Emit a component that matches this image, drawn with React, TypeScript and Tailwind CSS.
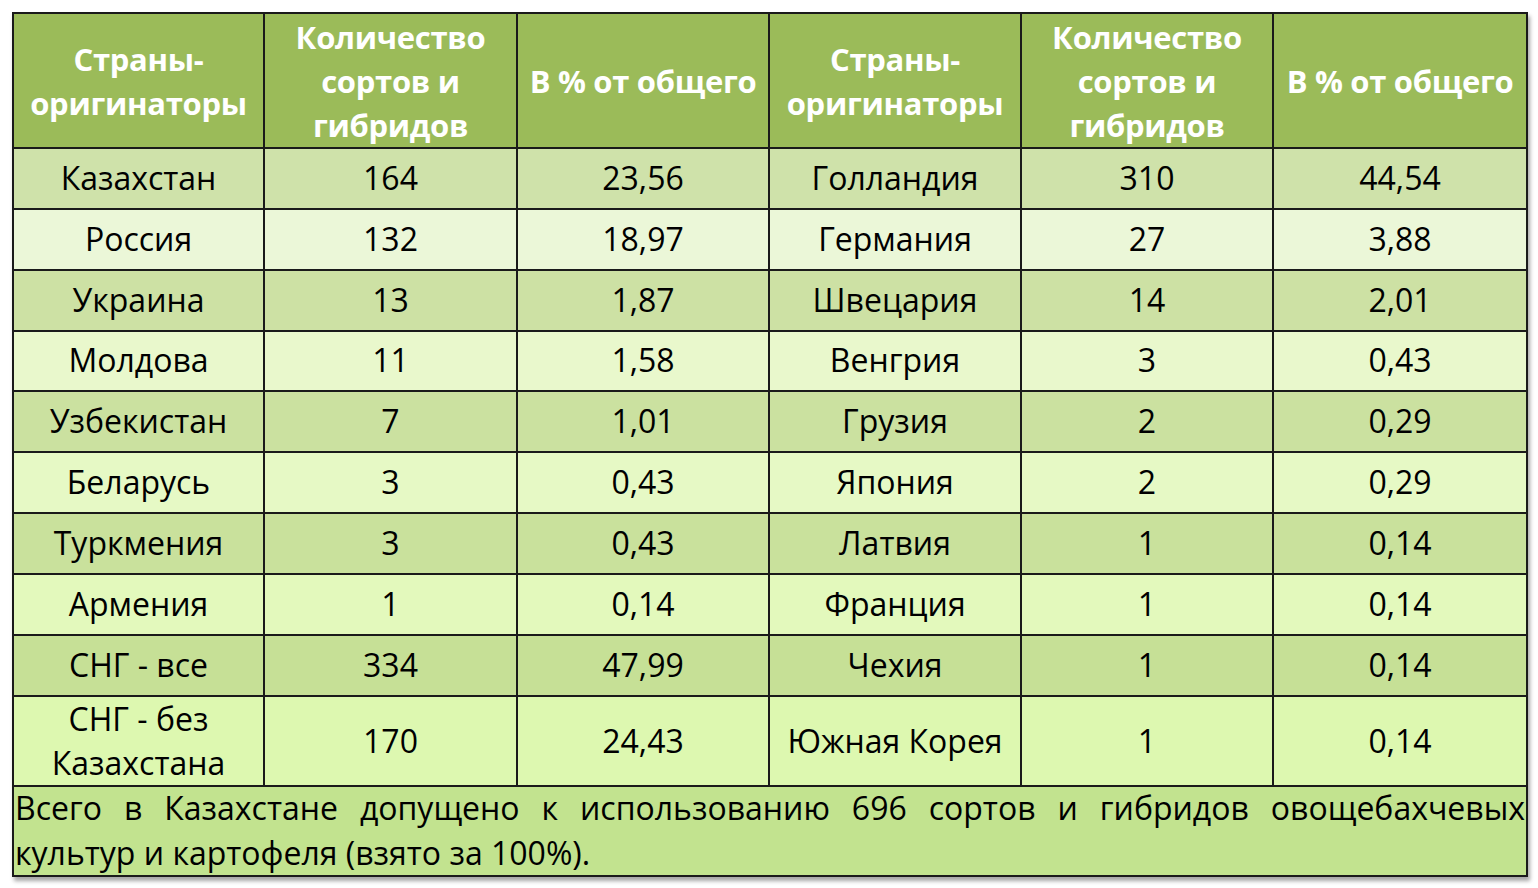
import React from "react";

const header = [
  "Страны-\nоригинаторы",
  "Количество\nсортов и\nгибридов",
  "В % от общего",
  "Страны-\nоригинаторы",
  "Количество\nсортов и\nгибридов",
  "В % от общего",
];

const rows: [string, string, string, string, string, string, string, string][] = [
  ["Казахстан", "164", "23,56", "Голландия", "310", "44,54", "bg-[#cfe2aa]", "h-[61px]"],
  ["Россия", "132", "18,97", "Германия", "27", "3,88", "bg-[#ebf7d8]", "h-[61px]"],
  ["Украина", "13", "1,87", "Швецария", "14", "2,01", "bg-[#cde1a4]", "h-[61px]"],
  ["Молдова", "11", "1,58", "Венгрия", "3", "0,43", "bg-[#e9f8cc]", "h-[60px]"],
  ["Узбекистан", "7", "1,01", "Грузия", "2", "0,29", "bg-[#cbe1a0]", "h-[61px]"],
  ["Беларусь", "3", "0,43", "Япония", "2", "0,29", "bg-[#e6f9c5]", "h-[61px]"],
  ["Туркмения", "3", "0,43", "Латвия", "1", "0,14", "bg-[#c9e19c]", "h-[61px]"],
  ["Армения", "1", "0,14", "Франция", "1", "0,14", "bg-[#e3f9bc]", "h-[61px]"],
  ["СНГ - все", "334", "47,99", "Чехия", "1", "0,14", "bg-[#c6e096]", "h-[61px]"],
  ["СНГ - без\nКазахстана", "170", "24,43", "Южная Корея", "1", "0,14", "bg-[#ddf8b0]", "h-[88px]"],
];

export default function App() {
  return (
    <div className="w-[1538px] h-[888px] bg-white pt-[12px] pl-[12px]" style={{ fontFamily: "'Open Sans', 'Noto Sans', sans-serif" }}>
      <div className="w-[1516px] shadow-[2px_4px_4px_rgba(0,0,0,0.35)]">
        <table className="w-[1516px] table-fixed border-collapse border-2 border-[#1a1a1a] text-black">
          <colgroup>
            <col className="w-[251px]" />
            <col className="w-[253px]" />
            <col className="w-[252px]" />
            <col className="w-[252px]" />
            <col className="w-[252px]" />
            <col className="w-[254px]" />
          </colgroup>
          <thead>
            <tr className="h-[135px] bg-[#9bbb59]">
              {header.map((h, i) => (
                <th
                  key={i}
                  className="border-2 border-[#1a1a1a] p-0 text-center align-middle text-[31px] font-bold leading-[44px] text-white whitespace-pre-line tracking-[-0.3px]"
                >
                  {h}
                </th>
              ))}
            </tr>
          </thead>
          <tbody>
            {rows.map((r, ri) => (
              <tr key={ri} className={`${r[6]} ${r[7]}`}>
                {r.slice(0, 6).map((c, ci) => (
                  <td
                    key={ci}
                    className={
                      ri === rows.length - 1
                        ? "border-2 border-[#1a1a1a] p-0 text-center align-middle text-[32px] leading-[44px] whitespace-pre-line"
                        : "border-2 border-[#1a1a1a] p-0 pb-[3px] text-center align-middle text-[32px] leading-[45px] whitespace-pre-line"
                    }
                  >
                    {c}
                  </td>
                ))}
              </tr>
            ))}
            <tr className="h-[90px] bg-[#c2e38f]">
              <td colSpan={6} className="border-2 border-[#1a1a1a] px-[1px] p-0 align-top text-[32px] leading-[45px]">
                <div className="-mt-[2px] text-justify [text-align-last:justify]">
                  Всего в Казахстане допущено к использованию 696 сортов и гибридов овощебахчевых
                </div>
                <div className="-mb-[5px]">культур и картофеля (взято за 100%).</div>
              </td>
            </tr>
          </tbody>
        </table>
      </div>
    </div>
  );
}
